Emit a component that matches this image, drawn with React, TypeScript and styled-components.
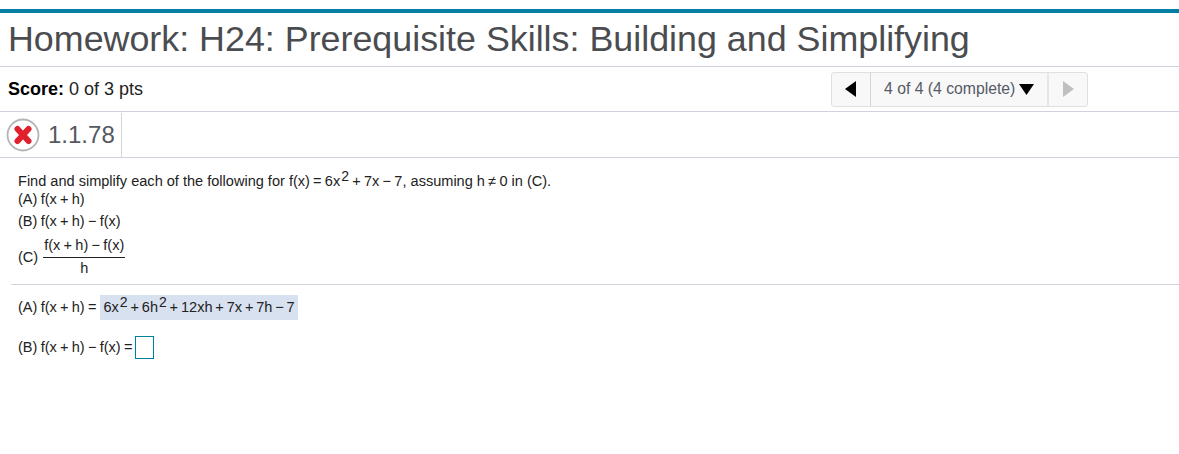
import styled, { createGlobalStyle } from "styled-components";

const GlobalStyle = createGlobalStyle`
  html, body {
    margin: 0;
    padding: 0;
    background: #fff;
    font-family: "Liberation Sans", Arial, sans-serif;
  }
`;

const Page = styled.div`
  padding-top: 9px;
  height: 445px;
  overflow: hidden;
`;

const Header = styled.header`
  border-top: 4px solid #007fa3;
  border-bottom: 1px solid #cdd1e0;
  height: 53px;
  padding-left: 8px;
`;

const Title = styled.h1`
  margin: 0;
  font-size: 35.85px;
  font-weight: normal;
  line-height: 53px;
  color: #4b4c50;
`;

const ScoreRow = styled.div`
  display: flex;
  align-items: center;
  justify-content: space-between;
  height: 44px;
  padding: 0 91px 0 8px;
  border-bottom: 1px solid #cdd1e0;
`;

const Score = styled.div`
  font-size: 18px;
  color: #222;

  & > b {
    color: #000;
  }
`;

const Pager = styled.div`
  display: flex;
  height: 33px;
  border: 1px solid #e0e0e0;
  border-radius: 3px;
  background: #f8f8f8;
`;

const PagerArrow = styled.div<{ $disabled?: boolean }>`
  width: 38px;
  box-sizing: border-box;
  padding-right: ${(p) => (p.$disabled ? 0 : 2)}px;
  display: flex;
  align-items: center;
  justify-content: center;
  color: ${(p) => (p.$disabled ? "#bfbfbf" : "#000")};
`;

const PagerLabel = styled.div`
  display: flex;
  align-items: center;
  gap: 4px;
  width: 179px;
  box-sizing: border-box;
  padding-left: 13px;
  border-left: 1px solid #d4d4d4;
  border-right: 2px solid #e6e6e6;
  font-size: 15.75px;
  color: #555a66;
`;

const TabRow = styled.div`
  display: flex;
  height: 45px;
  border-bottom: 1px solid #cdd1e0;
`;

const Tab = styled.div`
  display: flex;
  align-items: center;
  gap: 8px;
  width: 115px;
  height: 44px;
  margin-top: 1px;
  padding-left: 6px;
  border-right: 1px solid #d5d5d5;
  font-size: 24px;
  color: #55585f;
`;

const Content = styled.div`
  padding: 13px 0 0 18px;
  font-size: 14.55px;
  color: #222;
`;

const Line = styled.div<{ $height: number }>`
  display: flex;
  align-items: center;
  height: ${(p) => p.$height}px;
  white-space: pre;
`;

const Math = styled.span<{ $spacing?: number }>`
  display: inline-flex;
  align-items: center;
  white-space: pre;
  word-spacing: ${(p) => p.$spacing ?? -0.8}px;
`;

const Sup = styled.span`
  font-size: 14px;
  position: relative;
  top: -5px;
  line-height: 0;
  margin-left: 1px;
`;

const Fraction = styled.span`
  display: inline-flex;
  flex-direction: column;
  align-items: center;
  margin-left: 5px;
`;

const Numerator = styled.span`
  padding: 0 1px 4px;
  line-height: 16px;
  border-bottom: 1px solid #222;
`;

const Denominator = styled.span`
  line-height: 17px;
  padding-top: 2px;
`;

const Divider = styled.hr`
  margin: 5px 0 0 -7px;
  border: 0;
  border-top: 1px solid #d4d6de;
`;

const Highlight = styled.span`
  display: inline-flex;
  align-items: center;
  height: 25px;
  margin-left: 4px;
  padding: 0 3px;
  background: #d8e1f0;
`;

const AnswerBox = styled.span`
  display: inline-block;
  box-sizing: border-box;
  width: 19px;
  height: 23px;
  margin-left: 3px;
  border: 1px solid #007fa3;
  background: #fff;
`;

const WrongIcon = () => (
  <svg width="34" height="34" viewBox="0 0 34 34">
    <circle cx="17" cy="17" r="15.5" fill="#fff" stroke="#b5b5b5" strokeWidth="1.8" />
    <path d="M11.5 11 L22.5 23 M22.5 11 L11.5 23" stroke="#e0202c" strokeWidth="6" strokeLinecap="round" />
  </svg>
);

const Triangle = ({ points, w, h }: { points: string; w: number; h: number }) => (
  <svg width={w} height={h} viewBox={`0 0 ${w} ${h}`}>
    <polygon points={points} fill="currentColor" />
  </svg>
);

export default function App() {
  return (
    <Page>
      <GlobalStyle />
      <Header>
        <Title>Homework: H24: Prerequisite Skills: Building and Simplifying</Title>
      </Header>
      <ScoreRow>
        <Score>
          <b>Score:</b> 0 of 3 pts
        </Score>
        <Pager>
          <PagerArrow>
            <Triangle w={11} h={16} points="11,0 11,16 0,8" />
          </PagerArrow>
          <PagerLabel>
            4 of 4 (4 complete)
            <span style={{ color: "#000", display: "flex" }}>
              <Triangle w={15} h={11} points="0,0 15,0 7.5,11" />
            </span>
          </PagerLabel>
          <PagerArrow $disabled>
            <Triangle w={11} h={16} points="0,0 11,8 0,16" />
          </PagerArrow>
        </Pager>
      </ScoreRow>
      <TabRow>
        <Tab>
          <WrongIcon />
          1.1.78
        </Tab>
      </TabRow>
      <Content>
        <Line $height={20}>
          Find and simplify each of the following for <Math>f(x) = 6x<Sup>2</Sup> + 7x − 7</Math>, assuming <Math>h ≠ 0</Math> in (C).
        </Line>
        <Line $height={16}>
          <Math>(A) f(x + h)</Math>
        </Line>
        <Line $height={27}>
          <Math>(B) f(x + h) − f(x)</Math>
        </Line>
        <Line $height={45}>
          (C)
          <Fraction>
            <Numerator>
              <Math>f(x + h) − f(x)</Math>
            </Numerator>
            <Denominator>h</Denominator>
          </Fraction>
        </Line>
        <Divider />
        <Line $height={44}>
          <Math>(A) f(x + h) =</Math>
          <Highlight>
            <Math $spacing={-1.2}>6x<Sup>2</Sup> + 6h<Sup>2</Sup> + 12xh + 7x + 7h − 7</Math>
          </Highlight>
        </Line>
        <Line $height={36}>
          <Math>(B) f(x + h) − f(x) =</Math>
          <AnswerBox />
        </Line>
      </Content>
    </Page>
  );
}
